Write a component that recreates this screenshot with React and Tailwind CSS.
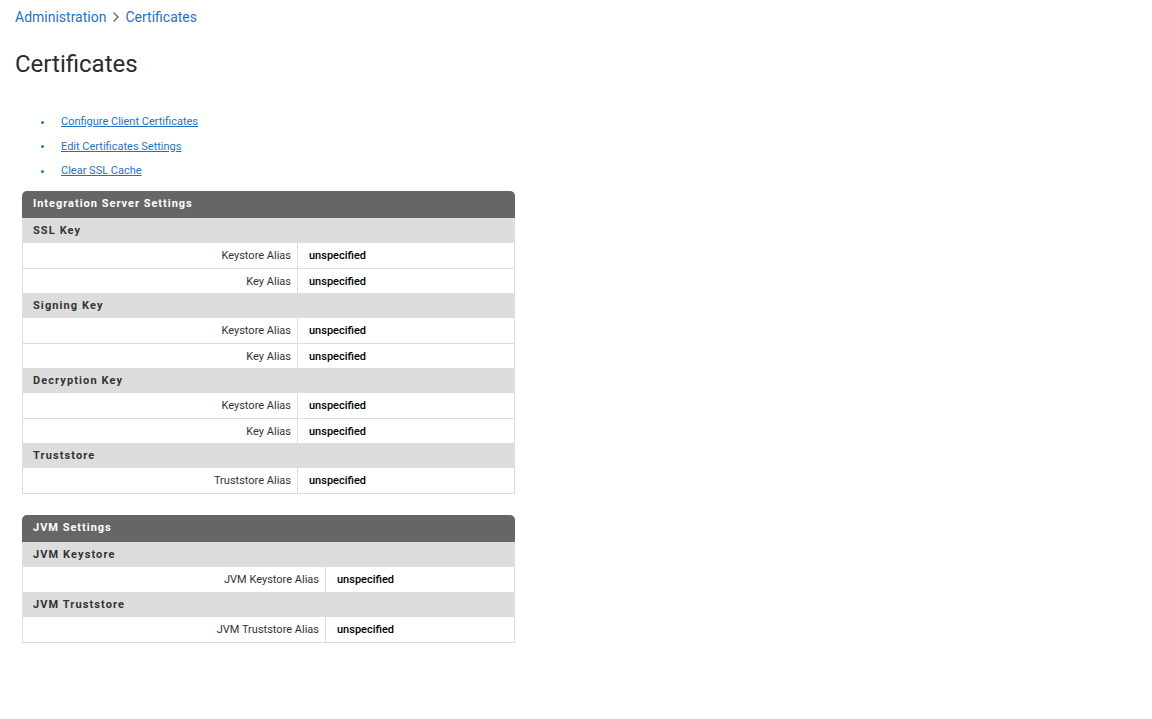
const font = { fontFamily: "Roboto, 'Liberation Sans', sans-serif" };

const serverRows = [
  { section: "SSL Key", rows: [["Keystore Alias", "unspecified"], ["Key Alias", "unspecified"]] },
  { section: "Signing Key", rows: [["Keystore Alias", "unspecified"], ["Key Alias", "unspecified"]] },
  { section: "Decryption Key", rows: [["Keystore Alias", "unspecified"], ["Key Alias", "unspecified"]] },
  { section: "Truststore", rows: [["Truststore Alias", "unspecified"]] },
];

const jvmRows = [
  { section: "JVM Keystore", rows: [["JVM Keystore Alias", "unspecified"]] },
  { section: "JVM Truststore", rows: [["JVM Truststore Alias", "unspecified"]] },
];

function SettingsTable({ title, groups, labelWidth }) {
  return (
    <div className="w-[493px]">
      <div className="h-[27px] bg-[#666666] rounded-t-[5px] flex items-center pt-px px-[11px] text-white text-[11px] font-bold tracking-[0.09em]">
        {title}
      </div>
      <div className="border-x border-b border-[#dddddd]">
        {groups.map((g) => (
          <div key={g.section}>
            <div className="h-[25px] bg-[#dddddd] flex items-center pt-[3px] px-[11px] text-[11px] font-bold tracking-[0.1em] text-[#333333] -mx-px">
              {g.section}
            </div>
            {g.rows.map(([label, value], i) => (
              <div
                key={label}
                className={`flex h-[25px] ${i > 0 ? "border-t border-[#dddddd]" : ""}`}
              >
                <div
                  className="flex items-center justify-end pt-[3px] pr-[6px] text-[11px] text-[#333333] border-r border-[#dddddd]"
                  style={{ width: labelWidth }}
                >
                  {label}
                </div>
                <div className="flex items-center pt-[3px] pl-[11px] text-[11px] font-medium text-black">{value}</div>
              </div>
            ))}
          </div>
        ))}
      </div>
    </div>
  );
}

export default function App() {
  return (
    <div className="min-h-screen bg-white px-[15px] pt-[8px]" style={font}>
      <div className="flex items-center text-[14px] text-[#1f73c4] h-[18px]">
        <a href="#" className="hover:underline">Administration</a>
        <svg className="w-[9px] h-[12px] mx-[5px] text-[#666666]" viewBox="0 0 9 12" fill="none">
          <path d="M2.5 1.5 7 6 2.5 10.5" stroke="currentColor" strokeWidth="1.4" />
        </svg>
        <a href="#" className="hover:underline">Certificates</a>
      </div>
      <h1 className="text-[24px] text-[#2b2b2b] mt-[23px] leading-[30px]">Certificates</h1>
      <ul className="mt-[35px] ml-[26px] flex flex-col gap-[8px]">
        {["Configure Client Certificates", "Edit Certificates Settings", "Clear SSL Cache"].map((t) => (
          <li key={t} className="flex items-center h-[16.5px]">
            <span className="w-[3px] h-[3px] rounded-full bg-[#1a7ab8] mr-[17px]"></span>
            <a href="#" className="text-[11px] text-[#1f73c4] underline">{t}</a>
          </li>
        ))}
      </ul>
      <div className="ml-[7px] mt-[11px] flex flex-col gap-[21px]">
        <SettingsTable title="Integration Server Settings" groups={serverRows} labelWidth={275} />
        <SettingsTable title="JVM Settings" groups={jvmRows} labelWidth={303} />
      </div>
    </div>
  );
}
